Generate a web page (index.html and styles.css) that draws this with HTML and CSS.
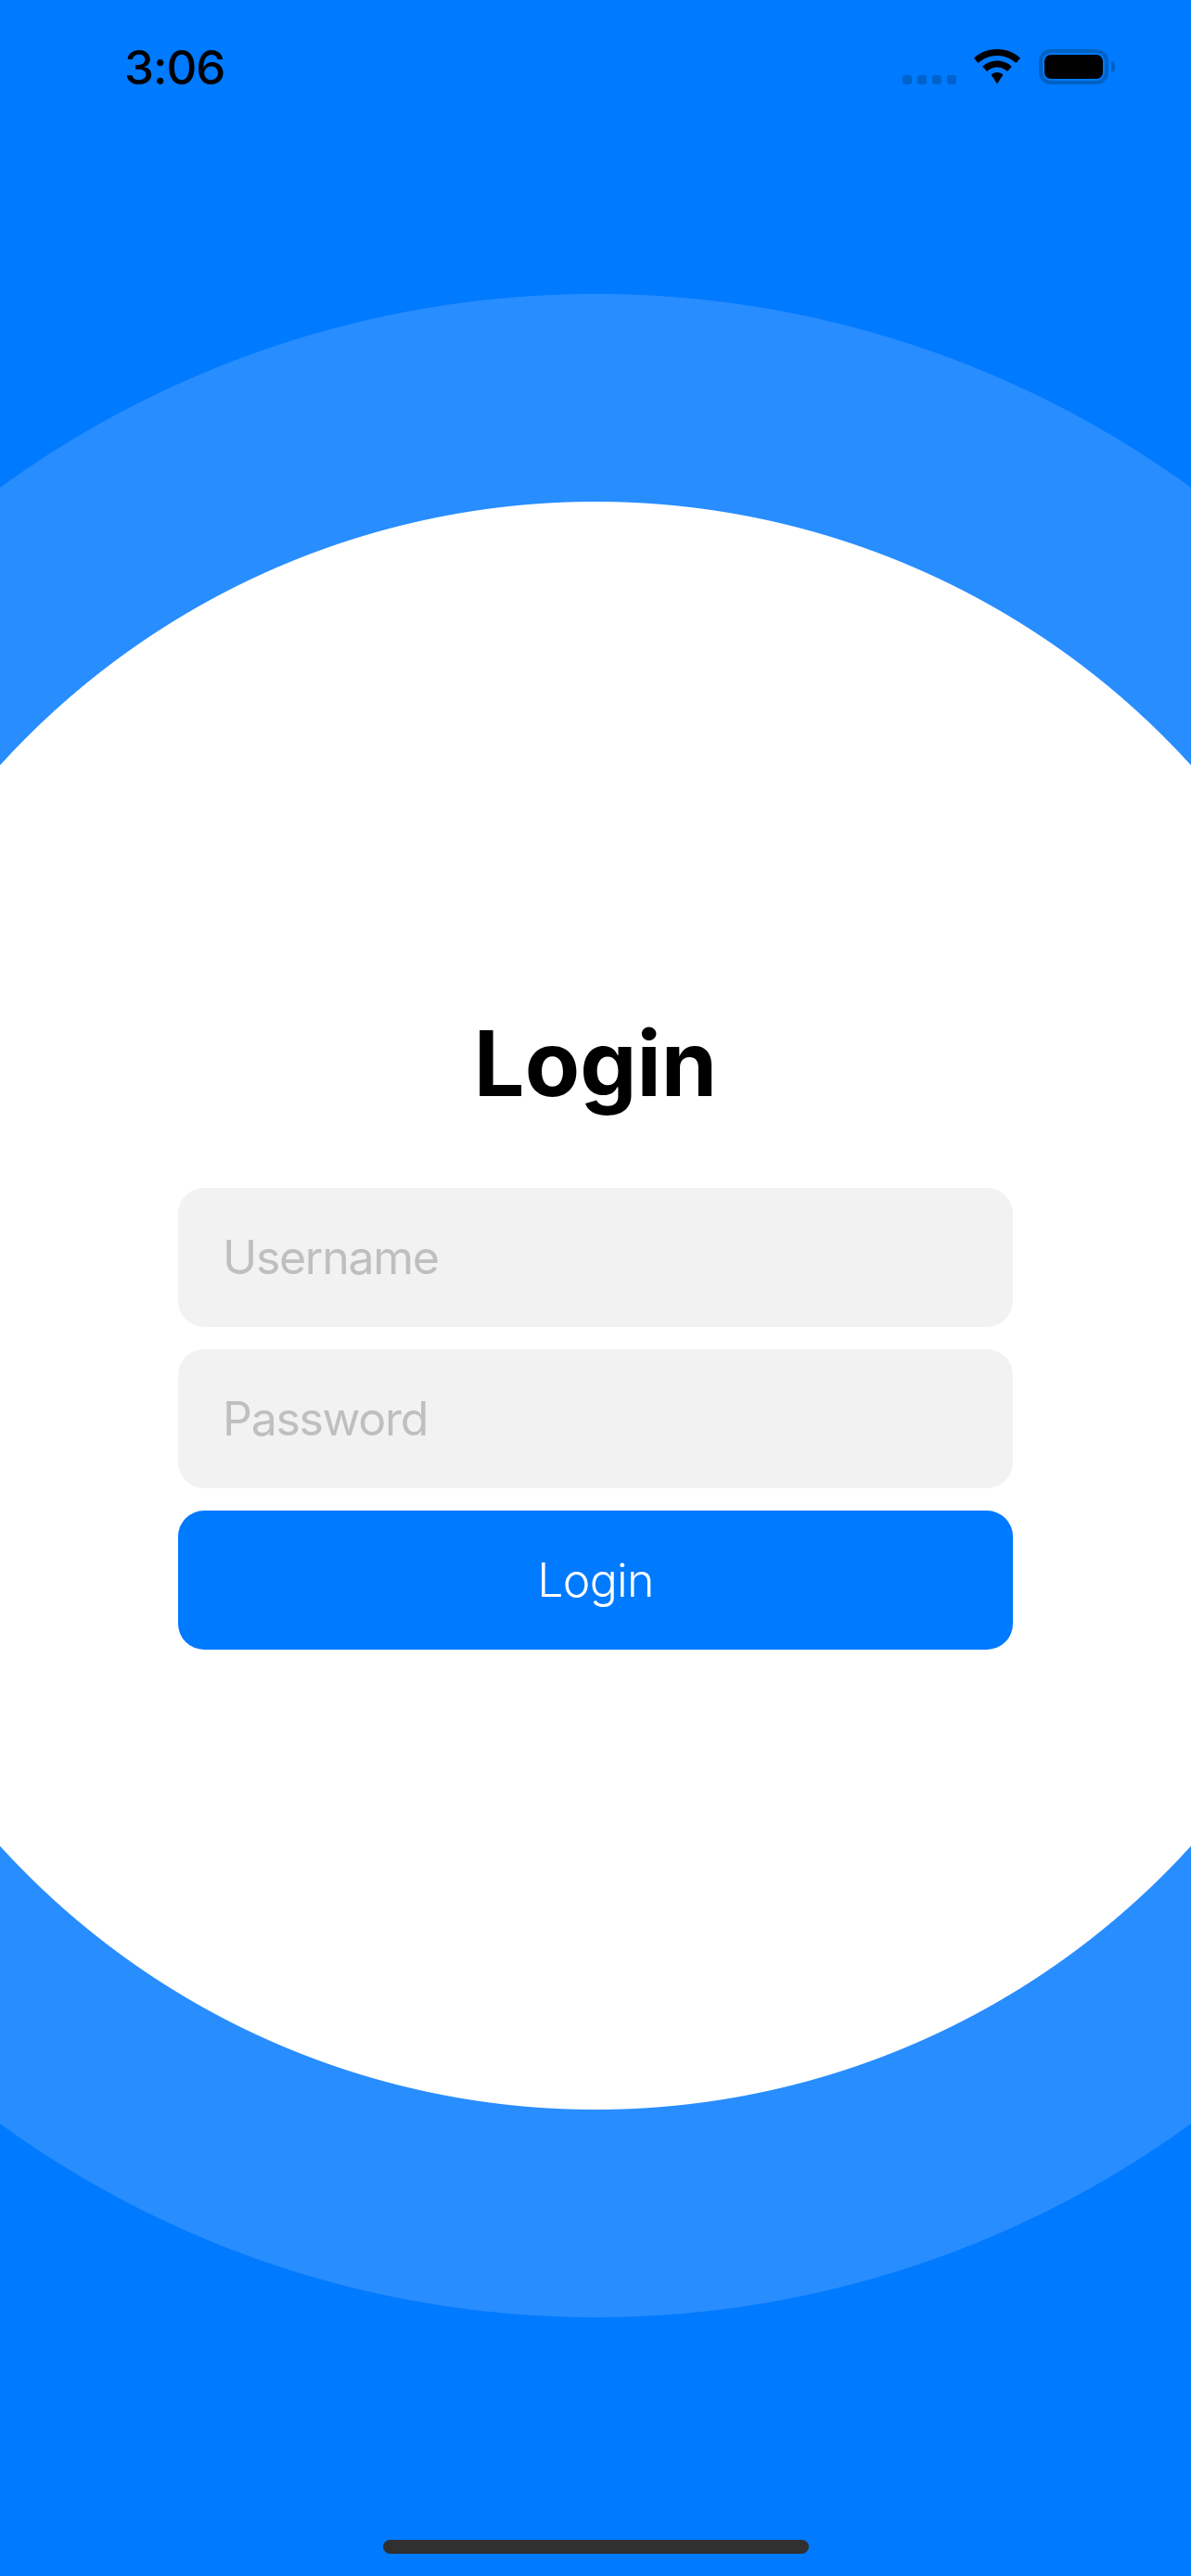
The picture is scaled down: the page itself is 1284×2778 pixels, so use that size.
FILE: index.html
```html
<!DOCTYPE html>
<html lang="en">
<head>
  <meta charset="UTF-8">
  <meta name="viewport" content="width=device-width, initial-scale=1.0">
  <title>Login</title>
  <link rel="stylesheet" href="styles.css">
</head>
<body>
  <div class="screen">
    <div class="status-bar">
      <span class="time">3:06</span>
      <div class="status-icons">
        <div class="signal"><span></span><span></span><span></span><span></span></div>
        <svg class="wifi" width="52" height="38" viewBox="0 0 52 38">
          <path d="M26 0C16 0 7.500 3.600 1 9.700L5.600 15C11 10 18 6.900 26 6.900S41 10 46.400 15L51 9.700C44.500 3.600 36 0 26 0Z"/>
          <path d="M26 12.500C20 12.500 14.500 14.800 10.300 18.700L15 24C18 21.300 21.800 19.600 26 19.600S34 21.300 37 24L41.700 18.700C37.500 14.800 32 12.500 26 12.500Z"/>
          <path d="M26 25C23.500 25 21.300 26 19.600 27.500L26 37.500L32.400 27.500C30.700 26 28.500 25 26 25Z"/>
        </svg>
        <div class="battery">
          <div class="battery-body"><div class="battery-level"></div></div>
          <div class="battery-cap"></div>
        </div>
      </div>
    </div>

    <div class="content">
      <form class="login-form">
        <h1>Login</h1>
        <input type="text" class="field" placeholder="Username">
        <input type="password" class="field" placeholder="Password">
        <button type="button" class="login-button">Login</button>
      </form>
    </div>

    <div class="home-bar"><div class="home-indicator"></div></div>
  </div>
</body>
</html>
```

FILE: styles.css
```css
* {
  box-sizing: border-box;
}

html, body {
  margin: 0;
  padding: 0;
}

body {
  font-family: Inter, "Liberation Sans", sans-serif;
  background-color: #007aff;
}

.screen {
  width: 1284px;
  height: 2778px;
  display: flex;
  flex-direction: column;
  overflow: hidden;
  background-image: radial-gradient(circle at 642px 1408px, #ffffff 866.5px, #288dff 867.5px, #288dff 1090.5px, #007aff 1091.5px);
}

.status-bar {
  height: 144px;
  padding: 46px 82px 0 134px;
  display: flex;
  justify-content: space-between;
  align-items: flex-start;
}

.time {
  font-size: 51px;
  font-weight: 500;
  line-height: 54px;
  letter-spacing: -1px;
  color: #000;
}

.status-icons {
  display: flex;
  align-items: flex-end;
  padding-top: 7px;
}

.signal {
  display: flex;
  gap: 6px;
  margin-right: 18px;
}

.signal span {
  width: 10px;
  height: 10px;
  border-radius: 3px;
  background-color: #0062cc;
}

.wifi {
  fill: #000;
  margin-right: 19px;
}

.battery {
  display: flex;
  align-items: center;
}

.battery-body {
  width: 75px;
  height: 38px;
  padding: 2px;
  border: 4px solid #0062c4;
  border-radius: 13px;
}

.battery-level {
  height: 100%;
  background-color: #000;
  border-radius: 7px;
}

.battery-cap {
  width: 4px;
  height: 12px;
  margin-left: 3px;
  background-color: #0062c4;
  border-radius: 0 6px 6px 0;
}

.content {
  flex: 1;
  padding: 929px 192px 0;
}

.login-form {
  display: flex;
  flex-direction: column;
  gap: 24px;
}

.login-form h1 {
  margin: 0 0 37px;
  font-size: 97px;
  font-weight: 700;
  line-height: 147px;
  text-align: center;
  color: #000;
}

.field {
  width: 100%;
  height: 150px;
  padding: 0 48px;
  border: none;
  border-radius: 28px;
  background-color: #f2f2f2;
  font-family: inherit;
  font-size: 50px;
  letter-spacing: -1.300px;
  color: #000;
  outline: none;
}

.field::placeholder {
  color: #bfbfc2;
  opacity: 1;
}

.login-button {
  width: 100%;
  height: 150px;
  border: none;
  border-radius: 28px;
  background-color: #007aff;
  font-family: inherit;
  font-size: 50px;
  font-weight: 300;
  letter-spacing: -0.700px;
  color: #fff;
}

.home-bar {
  height: 39px;
  display: flex;
  justify-content: center;
}

.home-indicator {
  width: 459px;
  height: 15px;
  border-radius: 8px;
  background-color: #303030;
}
```
